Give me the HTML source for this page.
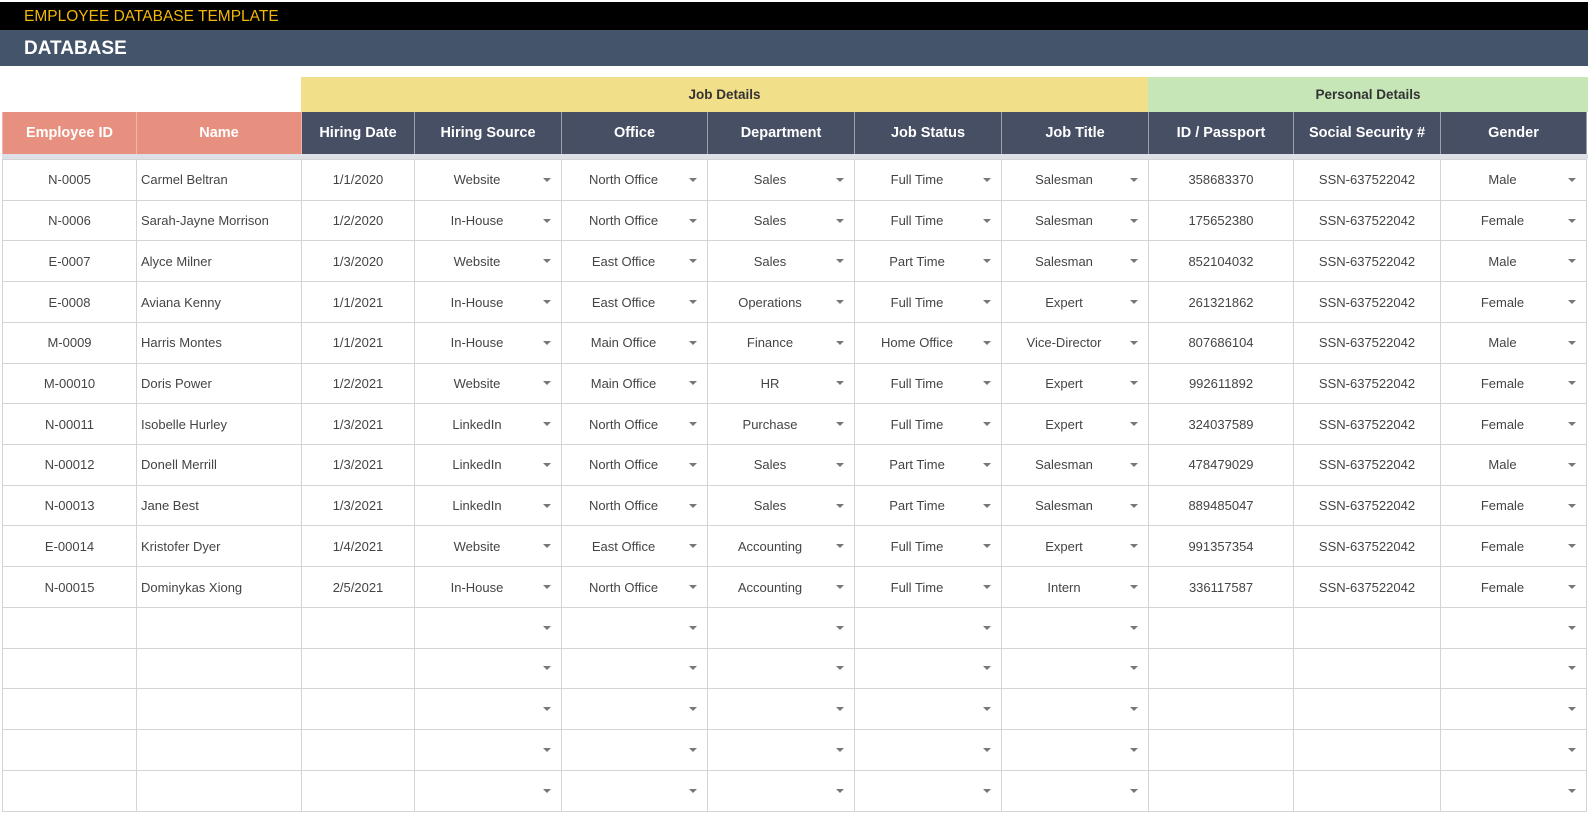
<!DOCTYPE html>
<html><head><meta charset="utf-8"><style>
*{margin:0;padding:0;box-sizing:border-box}
html,body{width:1588px;height:814px;overflow:hidden}
body{background:#fff;font-family:"Liberation Sans",sans-serif;position:relative}
.b1{position:absolute;left:0;top:2px;width:1588px;height:28px;background:#000;color:#f2b707;font-size:15.5px;line-height:29px;padding-left:24px}
.b2{position:absolute;left:0;top:30px;width:1588px;height:36px;background:#44546a;color:#fff;font-weight:bold;font-size:19px;line-height:38px;padding-left:24px}
.grp{position:absolute;top:77px;height:35px;font-weight:bold;font-size:13.5px;line-height:35px;text-align:center;color:#333}
table{position:absolute;left:2px;border-collapse:collapse;table-layout:fixed}
#h{top:112px}
#h td{height:42px;background:#474f65;color:#fff;font-weight:bold;font-size:14.5px;text-align:center;border-left:1px solid #9aa0ad;border-right:1px solid #9aa0ad}
#h td.s{background:#e8907f;border-color:#f0b4a8}
.strip{position:absolute;left:2px;top:154px;width:1586px;height:5px;background:#dde0e6}
#d{top:159px}
#d td{height:40.73px;border:1px solid #d4d4d4;font-size:13px;color:#444;text-align:center;position:relative;white-space:nowrap}
#d td.l{text-align:left;padding-left:4px}
#d td.a{padding-right:22px}
#d td.a::after{content:"";position:absolute;right:10px;top:50%;margin-top:-2px;border-left:4px solid transparent;border-right:4px solid transparent;border-top:4px solid #777}
</style></head><body>
<div class="b1">EMPLOYEE DATABASE TEMPLATE</div>
<div class="b2">DATABASE</div>
<div class="grp" style="left:301px;width:847px;background:#f2df8a">Job Details</div>
<div class="grp" style="left:1148px;width:440px;background:#c6e6b8">Personal Details</div>
<table id="h"><colgroup><col style="width:134px"><col style="width:165px"><col style="width:113px"><col style="width:147px"><col style="width:146px"><col style="width:147px"><col style="width:147px"><col style="width:147px"><col style="width:145px"><col style="width:147px"><col style="width:146px"></colgroup>
<tr><td class="s">Employee ID</td><td class="s">Name</td><td>Hiring Date</td><td>Hiring Source</td><td>Office</td><td>Department</td><td>Job Status</td><td>Job Title</td><td>ID / Passport</td><td>Social Security #</td><td>Gender</td></tr></table>
<div class="strip"></div>
<table id="d"><colgroup><col style="width:134px"><col style="width:165px"><col style="width:113px"><col style="width:147px"><col style="width:146px"><col style="width:147px"><col style="width:147px"><col style="width:147px"><col style="width:145px"><col style="width:147px"><col style="width:146px"></colgroup>
<tr><td>N-0005</td><td class="l">Carmel Beltran</td><td>1/1/2020</td><td class="a">Website</td><td class="a">North Office</td><td class="a">Sales</td><td class="a">Full Time</td><td class="a">Salesman</td><td>358683370</td><td>SSN-637522042</td><td class="a">Male</td></tr>
<tr><td>N-0006</td><td class="l">Sarah-Jayne Morrison</td><td>1/2/2020</td><td class="a">In-House</td><td class="a">North Office</td><td class="a">Sales</td><td class="a">Full Time</td><td class="a">Salesman</td><td>175652380</td><td>SSN-637522042</td><td class="a">Female</td></tr>
<tr><td>E-0007</td><td class="l">Alyce Milner</td><td>1/3/2020</td><td class="a">Website</td><td class="a">East Office</td><td class="a">Sales</td><td class="a">Part Time</td><td class="a">Salesman</td><td>852104032</td><td>SSN-637522042</td><td class="a">Male</td></tr>
<tr><td>E-0008</td><td class="l">Aviana Kenny</td><td>1/1/2021</td><td class="a">In-House</td><td class="a">East Office</td><td class="a">Operations</td><td class="a">Full Time</td><td class="a">Expert</td><td>261321862</td><td>SSN-637522042</td><td class="a">Female</td></tr>
<tr><td>M-0009</td><td class="l">Harris Montes</td><td>1/1/2021</td><td class="a">In-House</td><td class="a">Main Office</td><td class="a">Finance</td><td class="a">Home Office</td><td class="a">Vice-Director</td><td>807686104</td><td>SSN-637522042</td><td class="a">Male</td></tr>
<tr><td>M-00010</td><td class="l">Doris Power</td><td>1/2/2021</td><td class="a">Website</td><td class="a">Main Office</td><td class="a">HR</td><td class="a">Full Time</td><td class="a">Expert</td><td>992611892</td><td>SSN-637522042</td><td class="a">Female</td></tr>
<tr><td>N-00011</td><td class="l">Isobelle Hurley</td><td>1/3/2021</td><td class="a">LinkedIn</td><td class="a">North Office</td><td class="a">Purchase</td><td class="a">Full Time</td><td class="a">Expert</td><td>324037589</td><td>SSN-637522042</td><td class="a">Female</td></tr>
<tr><td>N-00012</td><td class="l">Donell Merrill</td><td>1/3/2021</td><td class="a">LinkedIn</td><td class="a">North Office</td><td class="a">Sales</td><td class="a">Part Time</td><td class="a">Salesman</td><td>478479029</td><td>SSN-637522042</td><td class="a">Male</td></tr>
<tr><td>N-00013</td><td class="l">Jane Best</td><td>1/3/2021</td><td class="a">LinkedIn</td><td class="a">North Office</td><td class="a">Sales</td><td class="a">Part Time</td><td class="a">Salesman</td><td>889485047</td><td>SSN-637522042</td><td class="a">Female</td></tr>
<tr><td>E-00014</td><td class="l">Kristofer Dyer</td><td>1/4/2021</td><td class="a">Website</td><td class="a">East Office</td><td class="a">Accounting</td><td class="a">Full Time</td><td class="a">Expert</td><td>991357354</td><td>SSN-637522042</td><td class="a">Female</td></tr>
<tr><td>N-00015</td><td class="l">Dominykas Xiong</td><td>2/5/2021</td><td class="a">In-House</td><td class="a">North Office</td><td class="a">Accounting</td><td class="a">Full Time</td><td class="a">Intern</td><td>336117587</td><td>SSN-637522042</td><td class="a">Female</td></tr>
<tr><td></td><td></td><td></td><td class="a"></td><td class="a"></td><td class="a"></td><td class="a"></td><td class="a"></td><td></td><td></td><td class="a"></td></tr>
<tr><td></td><td></td><td></td><td class="a"></td><td class="a"></td><td class="a"></td><td class="a"></td><td class="a"></td><td></td><td></td><td class="a"></td></tr>
<tr><td></td><td></td><td></td><td class="a"></td><td class="a"></td><td class="a"></td><td class="a"></td><td class="a"></td><td></td><td></td><td class="a"></td></tr>
<tr><td></td><td></td><td></td><td class="a"></td><td class="a"></td><td class="a"></td><td class="a"></td><td class="a"></td><td></td><td></td><td class="a"></td></tr>
<tr><td></td><td></td><td></td><td class="a"></td><td class="a"></td><td class="a"></td><td class="a"></td><td class="a"></td><td></td><td></td><td class="a"></td></tr>
</table>
</body></html>
